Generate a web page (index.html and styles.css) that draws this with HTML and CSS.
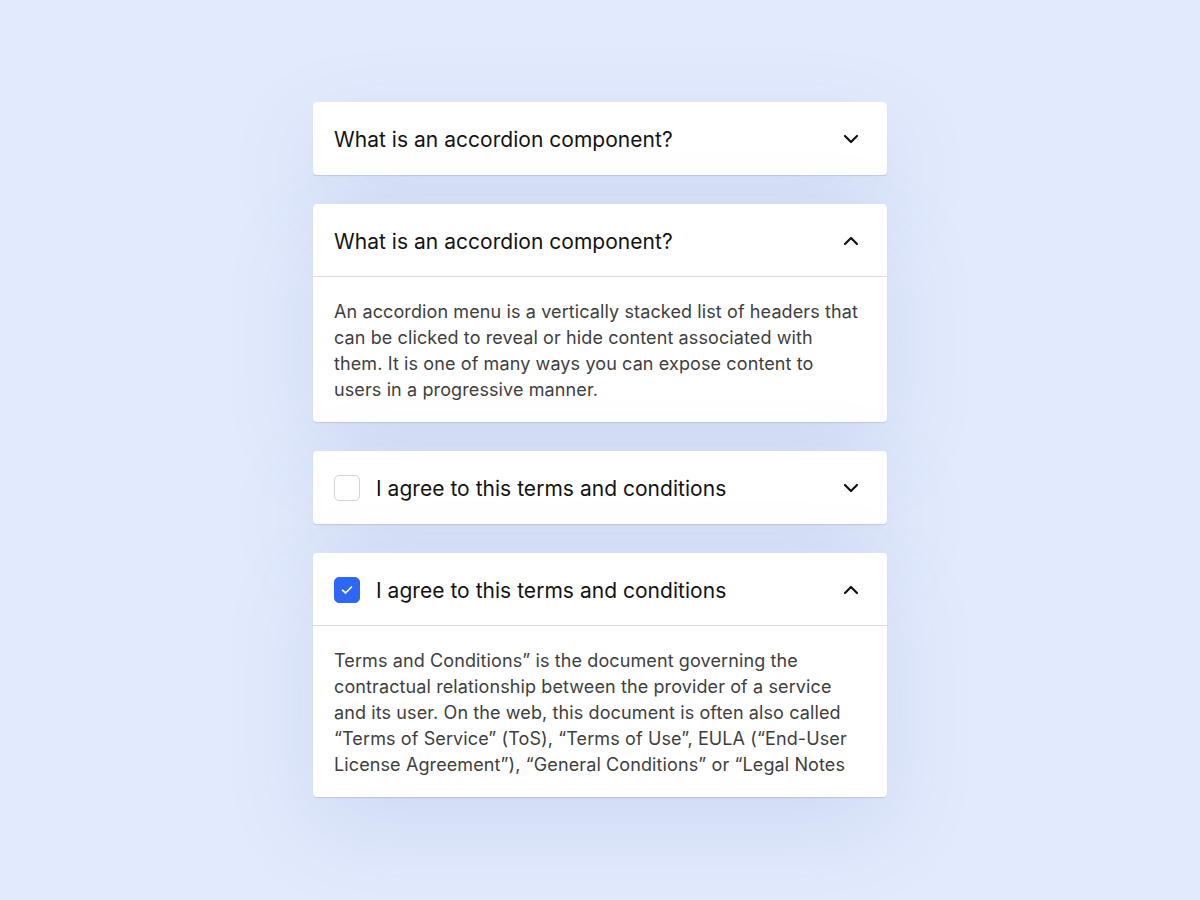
FILE: index.html
```html
<!DOCTYPE html>
<html>
<head>
<meta charset="utf-8">
<link rel="stylesheet" href="styles.css">
</head>
<body>
<main class="stack">
  <section class="card">
    <div class="head">
      <span class="title">What is an accordion component?</span>
      <svg class="chev" width="16" height="10" viewBox="0 0 16 10"><path d="M2 2 L8 8 L14 2" fill="none" stroke="#111" stroke-width="2.2" stroke-linecap="round" stroke-linejoin="round"/></svg>
    </div>
  </section>

  <section class="card">
    <div class="head open">
      <span class="title">What is an accordion component?</span>
      <svg class="chev" width="16" height="10" viewBox="0 0 16 10"><path d="M2 8 L8 2 L14 8" fill="none" stroke="#111" stroke-width="2.2" stroke-linecap="round" stroke-linejoin="round"/></svg>
    </div>
    <div class="body">An accordion menu is a vertically stacked list of headers that can be clicked to reveal or hide content associated with them. It is one of many ways you can expose content to users in a progressive manner.</div>
  </section>

  <section class="card">
    <div class="head">
      <span class="box"></span>
      <span class="title">I agree to this terms and conditions</span>
      <svg class="chev" width="16" height="10" viewBox="0 0 16 10"><path d="M2 2 L8 8 L14 2" fill="none" stroke="#111" stroke-width="2.2" stroke-linecap="round" stroke-linejoin="round"/></svg>
    </div>
  </section>

  <section class="card">
    <div class="head open">
      <span class="box checked"><svg width="14" height="14" viewBox="0 0 14 14"><path d="M2.5 7.2 L5.6 10 L11.5 4" fill="none" stroke="#fff" stroke-width="1.7" stroke-linecap="round" stroke-linejoin="round"/></svg></span>
      <span class="title">I agree to this terms and conditions</span>
      <svg class="chev" width="16" height="10" viewBox="0 0 16 10"><path d="M2 8 L8 2 L14 8" fill="none" stroke="#111" stroke-width="2.2" stroke-linecap="round" stroke-linejoin="round"/></svg>
    </div>
    <div class="body">Terms and Conditions” is the document governing the contractual relationship between the provider of a service and its user. On the web, this document is often also called “Terms of Service” (ToS), “Terms of Use”, EULA (“End-User License Agreement”), “General Conditions” or “Legal Notes</div>
  </section>
</main>
</body>
</html>
```

FILE: styles.css
```css
html, body {
  margin: 0;
  padding: 0;
}
body {
  background: #e2eafd;
  font-family: Inter, "Noto Sans", sans-serif;
  width: 1200px;
  height: 900px;
  overflow: hidden;
}
.stack {
  width: 574px;
  margin: 0 auto;
  padding-top: 102px;
  display: flex;
  flex-direction: column;
  gap: 29px;
}
.card {
  background: #fff;
  border-radius: 4px;
  box-shadow: 0 1px 1px rgba(0, 0, 0, 0.12), 0 30px 90px rgba(80, 105, 170, 0.13);
}
.head {
  height: 73px;
  box-sizing: border-box;
  display: flex;
  align-items: center;
  padding: 1px 28px 0 21px;
}
.head.open {
  border-bottom: 1px solid #dcdcdc;
  padding-top: 2px;
}
.title {
  flex: 1;
  font-size: 21px;
  color: #131313;
  letter-spacing: 0.03px;
}
.chev {
  display: block;
  flex: none;
}
.box {
  width: 24px;
  height: 24px;
  border: 1px solid #d4d4d4;
  border-radius: 5px;
  margin-right: 16px;
  flex: none;
  display: flex;
  align-items: center;
  justify-content: center;
  box-sizing: content-box;
}
.box.checked {
  background: #2e66f6;
  border-color: #2e66f6;
}
.body {
  padding: 22px 25px 19px 21px;
  font-size: 18px;
  line-height: 26px;
  letter-spacing: 0.11px;
  color: #3e3e3e;
}
```
